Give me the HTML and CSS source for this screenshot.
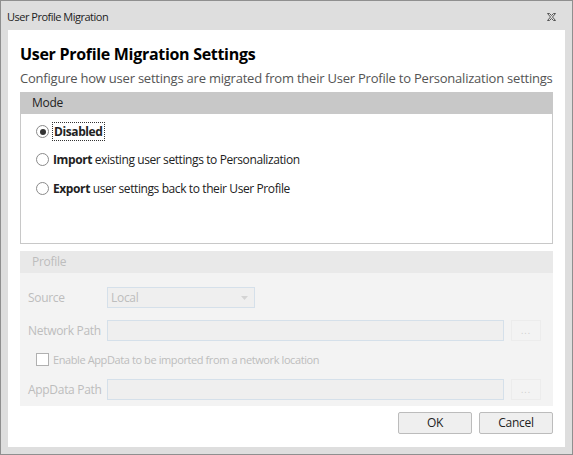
FILE: index.html
```html
<!DOCTYPE html>
<html>
<head>
<meta charset="utf-8">
<link rel="stylesheet" href="styles.css">
</head>
<body>
<div class="window">
  <div class="titlebar">
    <span class="title">User Profile Migration</span>
    <svg class="close" width="11" height="10" viewBox="0 0 11 10">
      <path d="M1.5 1.5 L3.5 1.5 L5.5 3.5 L7.5 1.5 L9.5 1.5 L6.5 5 L9.5 8.5 L7.5 8.5 L5.5 6.5 L3.5 8.5 L1.5 8.5 L4.5 5 Z" fill="none" stroke="#555" stroke-width="1"/>
    </svg>
  </div>
  <div class="client">
    <h1 class="heading">User Profile Migration Settings</h1>
    <p class="subtitle">Configure how user settings are migrated from their User Profile to Personalization settings</p>

    <div class="group mode">
      <div class="group-head">Mode</div>
      <div class="group-body mode-body">
        <label class="radio"><span class="dot checked"></span><span class="focus"><b>Disabled</b></span></label>
        <label class="radio"><span class="dot"></span><span><b>Import</b> existing user settings to Personalization</span></label>
        <label class="radio last"><span class="dot"></span><span><b>Export</b> user settings back to their User Profile</span></label>
      </div>
    </div>

    <div class="group profile">
      <div class="group-head">Profile</div>
      <div class="group-body profile-body">
        <div class="row">
          <span class="lbl">Source</span>
          <div class="combo"><span>Local</span><svg width="7" height="4" viewBox="0 0 7 4"><path d="M0 0 L7 0 L3.5 4 Z" fill="#d4d4d4"/></svg></div>
        </div>
        <div class="row">
          <span class="lbl">Network Path</span>
          <div class="field"></div>
          <div class="browse">...</div>
        </div>
        <div class="row check-row">
          <span class="box"></span>
          <span class="check-text">Enable AppData to be imported from a network location</span>
        </div>
        <div class="row">
          <span class="lbl">AppData Path</span>
          <div class="field"></div>
          <div class="browse">...</div>
        </div>
      </div>
    </div>

    <div class="buttons">
      <div class="btn">OK</div>
      <div class="btn">Cancel</div>
    </div>
  </div>
</div>
</body>
</html>
```

FILE: styles.css
```css
html, body {
  margin: 0;
  padding: 0;
}
body {
  font-family: "Open Sans", "Noto Sans", sans-serif;
  background: #dedede;
}
.window {
  width: 573px;
  height: 455px;
  box-sizing: border-box;
  border: 1px solid #8f8f8f;
  background: #dedede;
  display: flex;
  flex-direction: column;
}
.titlebar {
  height: 29px;
  flex: none;
  display: flex;
  align-items: center;
  justify-content: space-between;
  padding: 0 15px 0 6px;
  box-sizing: border-box;
}
.title {
  font-size: 11px;
  color: #222;
  letter-spacing: -0.5px;
  margin-top: 2px;
}
.close {
  margin-top: 2px;
}
.client {
  flex: 1;
  margin: 0 7px 7px 7px;
  background: #fff;
  padding: 0 12px;
  display: flex;
  flex-direction: column;
}
.heading {
  margin: 13px 0 0 0;
  font-size: 16px;
  font-weight: 700;
  color: #000;
  line-height: 22px;
  letter-spacing: -0.3px;
}
.subtitle {
  margin: 4px 0 0 0;
  font-size: 13px;
  line-height: 18px;
  color: #545454;
  letter-spacing: -0.22px;
  white-space: nowrap;
}
.group {
  display: flex;
  flex-direction: column;
}
.group-head {
  height: 22px;
  line-height: 22px;
  padding-left: 12px;
  font-size: 12px;
  letter-spacing: -0.3px;
}
.mode {
  margin-top: 5px;
}
.mode .group-head {
  background: #c8c8c8;
  color: #222;
}
.mode-body {
  height: 130px;
  border: 1px solid #c8c8c8;
  border-top: none;
  display: flex;
  flex-direction: column;
  padding: 8px 0 0 15px;
  box-sizing: border-box;
  gap: 9px;
}
.radio {
  display: flex;
  align-items: center;
  gap: 4px;
  font-size: 12px;
  color: #222;
  height: 19px;
  letter-spacing: -0.4px;
}
.radio.last {
  margin-top: 1px;
}
.radio b {
  font-weight: 700;
}
.dot {
  width: 13px;
  height: 13px;
  border: 1px solid #8a8a8a;
  border-radius: 50%;
  box-sizing: border-box;
  position: relative;
  background: #fff;
  flex: none;
}
.dot.checked::after {
  content: "";
  position: absolute;
  left: 2.5px;
  top: 2.5px;
  width: 6px;
  height: 6px;
  border-radius: 50%;
  background: #333;
}
.focus {
  outline: 1px dotted #333;
  padding: 0 1px;
}
.profile {
  margin-top: 7px;
}
.profile .group-head {
  background: #e9e9e9;
  color: #bdbdbd;
}
.profile-body {
  height: 133px;
  background: #f3f3f3;
  display: flex;
  flex-direction: column;
  padding: 14px 12px 0 8px;
  box-sizing: border-box;
  color: #bdbdbd;
  font-size: 12px;
  letter-spacing: -0.3px;
}
.row {
  display: flex;
  align-items: center;
  height: 22px;
  margin-bottom: 12px;
}
.lbl {
  width: 79px;
  flex: none;
}
.combo {
  width: 148px;
  height: 21px;
  box-sizing: border-box;
  border: 1px solid #d5e0ea;
  background: #efefef;
  display: flex;
  align-items: center;
  justify-content: space-between;
  padding: 0 6px 0 3px;
}
.field {
  width: 397px;
  height: 21px;
  box-sizing: border-box;
  border: 1px solid #d5e0ea;
  background: #efefef;
}
.browse {
  width: 30px;
  height: 21px;
  margin-left: 7px;
  box-sizing: border-box;
  border: 1px solid #ececec;
  background: #f3f3f3;
  font-size: 9px;
  color: #cdcdcd;
  text-align: center;
  line-height: 19px;
  letter-spacing: 1px;
}
.check-row {
  padding-left: 8px;
  height: 14px;
  margin-top: -1px;
  margin-bottom: 13px;
  gap: 4px;
}
.check-text {
  font-size: 11px;
  letter-spacing: -0.4px;
}
.box {
  width: 13px;
  height: 13px;
  border: 1px solid #b0b0b0;
  background: #fff;
  box-sizing: border-box;
  flex: none;
}
.buttons {
  display: flex;
  justify-content: flex-end;
  gap: 7px;
  margin-top: 6px;
}
.btn {
  width: 74px;
  height: 22px;
  box-sizing: border-box;
  border: 1px solid #bcbcbc;
  border-radius: 2px;
  background: #efefef;
  font-size: 12px;
  color: #222;
  text-align: center;
  line-height: 20px;
  letter-spacing: -0.3px;
}
```
